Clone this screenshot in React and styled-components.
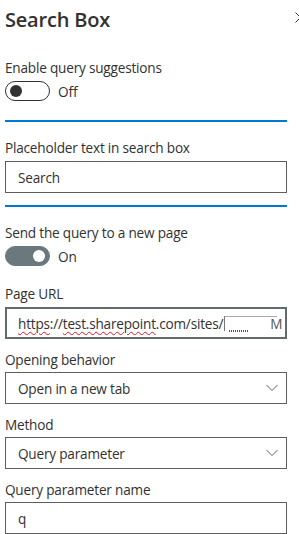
import React from "react";
import styled, { createGlobalStyle } from "styled-components";

const GlobalStyle = createGlobalStyle`
  html, body {
    margin: 0;
    padding: 0;
    background: #fff;
  }
  body {
    font-family: "Open Sans", "Noto Sans", sans-serif;
    color: #323130;
  }
`;

const Pane = styled.div`
  width: 299px;
  height: 534px;
  overflow: hidden;
  box-sizing: border-box;
  padding: 0 12px 0 5px;
`;

const Header = styled.div`
  display: flex;
  align-items: center;
  justify-content: space-between;
  height: 36px;
  padding-top: 1px;
  margin-right: -12px;

  h1 {
    margin: 0;
    font-size: 20px;
    font-weight: 600;
    letter-spacing: -0.2px;
    color: #323130;
  }
`;

const CloseIcon = styled.svg`
  width: 11px;
  height: 11px;
  margin-right: -7px;
  margin-top: -3px;
  flex-shrink: 0;
`;

const Group = styled.div`
  padding-top: ${p => p.$top || 16}px;
  padding-bottom: ${p => p.$bottom || 0}px;
  border-bottom: ${p => (p.$divider ? "2px solid #0078d4" : "none")};
`;

const Label = styled.div`
  font-size: 13.6px;
  letter-spacing: -0.2px;
  line-height: 20px;
  margin-bottom: ${p => p.$gap || 0}px;
  white-space: nowrap;
`;

const ToggleRow = styled.div`
  display: flex;
  align-items: center;
  gap: 8px;
  font-size: 13.6px;
`;

const Track = styled.div`
  box-sizing: border-box;
  width: 45px;
  height: 20px;
  border-radius: 10px;
  border: 1px solid ${p => (p.$on ? "#69797e" : "#323130")};
  background: ${p => (p.$on ? "#69797e" : "#fff")};
  display: flex;
  align-items: center;
  justify-content: ${p => (p.$on ? "flex-end" : "flex-start")};
  padding: 0 4px;

  &::after {
    content: "";
    width: 12px;
    height: 12px;
    border-radius: 50%;
    background: ${p => (p.$on ? "#fff" : "#323130")};
  }
`;

const Field = styled.div`
  box-sizing: border-box;
  height: 32px;
  border: ${p => (p.$focused ? "2px solid #5f6b6d" : "1px solid #605e5c")};
  display: flex;
  align-items: center;
  justify-content: space-between;
  padding: 0 ${p => (p.$focused ? 7 : 8)}px 0 ${p => (p.$focused ? 11 : 12)}px;
  font-size: 13.6px;
  letter-spacing: -0.2px;
  white-space: nowrap;
  overflow: hidden;
`;

const Squiggle = styled.span`
  text-decoration: underline wavy #e81123;
  text-decoration-thickness: 1px;
  text-underline-offset: 2px;
`;

const Redacted = styled.span`
  display: inline-block;
  width: 52px;
  height: 14px;
  vertical-align: -2px;
  position: relative;
  margin-left: 1px;
  border-left: 1px solid #777;
  border-top: 1px solid #aaa;

  &::before {
    content: "";
    position: absolute;
    left: 4px;
    width: 20px;
    bottom: -1px;
    height: 2px;
    background: repeating-linear-gradient(90deg, #e81123 0 1px, transparent 1px 2px);
  }

  &::after {
    content: "M";
    position: absolute;
    right: -5px;
    top: -3px;
    color: #555;
  }
`;

const Chevron = styled.svg`
  width: 12px;
  height: 8px;
  flex-shrink: 0;
`;

const FieldBlock = styled.div`
  margin-top: ${p => p.$top || 11}px;
`;

const ChevronDown = () => (
  <Chevron viewBox="0 0 12 8">
    <path d="M0.5 1 L6 6.5 L11.5 1" fill="none" stroke="#605e5c" strokeWidth="1" />
  </Chevron>
);

export default function App() {
  return (
    <>
      <GlobalStyle />
      <Pane>
        <Header>
          <h1>Search Box</h1>
          <CloseIcon viewBox="0 0 11 11">
            <path d="M0.5 0.5 L10.5 10.5 M10.5 0.5 L0.5 10.5" stroke="#323130" strokeWidth="1" />
          </CloseIcon>
        </Header>

        <Group $top={21} $bottom={19} $divider>
          <Label $gap={3}>Enable query suggestions</Label>
          <ToggleRow>
            <Track />
            <span>Off</span>
          </ToggleRow>
        </Group>

        <Group $top={16} $bottom={12} $divider>
          <Label $gap={3}>Placeholder text in search box</Label>
          <Field>Search</Field>
        </Group>

        <Group $top={16}>
          <Label $gap={3}>Send the query to a new page</Label>
          <ToggleRow>
            <Track $on />
            <span>On</span>
          </ToggleRow>
        </Group>

        <FieldBlock $top={18}>
          <Label $gap={3}>Page URL</Label>
          <Field $focused>
            <span>
              <Squiggle>https</Squiggle>://<Squiggle>test.sharepoint</Squiggle>.com/sites/
              <Redacted />
            </span>
          </Field>
        </FieldBlock>

        <FieldBlock>
          <Label $gap={2}>Opening behavior</Label>
          <Field>
            <span>Open in a new tab</span>
            <ChevronDown />
          </Field>
        </FieldBlock>

        <FieldBlock>
          <Label $gap={2}>Method</Label>
          <Field>
            <span>Query parameter</span>
            <ChevronDown />
          </Field>
        </FieldBlock>

        <FieldBlock>
          <Label $gap={2}>Query parameter name</Label>
          <Field>q</Field>
        </FieldBlock>
      </Pane>
    </>
  );
}
